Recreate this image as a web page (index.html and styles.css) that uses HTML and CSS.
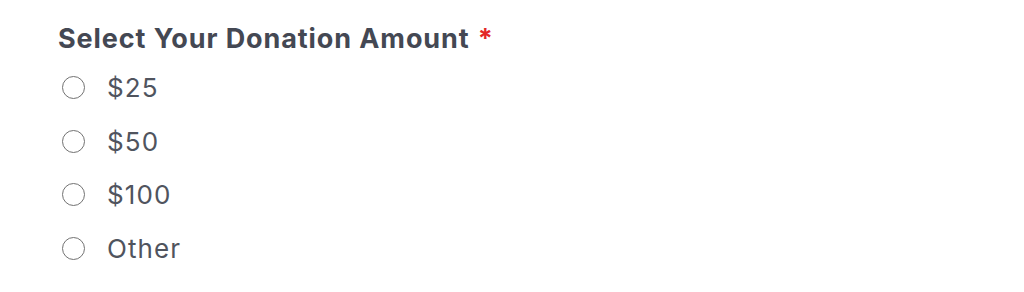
FILE: index.html
```html
<!DOCTYPE html>
<html lang="en">
<head>
    <meta charset="UTF-8">
    <meta name="viewport" content="width=device-width, initial-scale=1.0">
    <title>Donation</title>
    <link rel="stylesheet" href="styles.css">
</head>
<body>
    <div class="field">
        <div class="field-label">Select Your Donation Amount <span class="required">*</span></div>
        <ul class="choices">
            <li><label><input type="radio" name="amount"><span class="circle"></span>$25</label></li>
            <li><label><input type="radio" name="amount"><span class="circle"></span>$50</label></li>
            <li><label><input type="radio" name="amount"><span class="circle"></span>$100</label></li>
            <li><label><input type="radio" name="amount"><span class="circle"></span>Other</label></li>
        </ul>
    </div>
</body>
</html>
```

FILE: styles.css
```css
body {
    margin: 0;
    background: #fff;
    font-family: Inter, "Liberation Sans", Arial, sans-serif;
}

.field {
    padding: 22px 0 0 58px;
}

.field-label {
    font-size: 27px;
    font-weight: 700;
    letter-spacing: 0.9px;
    color: #444853;
    line-height: 34px;
}

.required {
    color: #e32727;
    margin-left: 1px;
}

.choices {
    list-style: none;
    margin: 0;
    padding: 0;
    margin-top: 5px;
}

.choices li {
    height: 53.5px;
    display: flex;
    align-items: center;
}

.choices label {
    display: flex;
    align-items: center;
    font-size: 26px;
    letter-spacing: 1.1px;
    color: #50545e;
}

.choices input {
    display: none;
}

.circle {
    width: 21px;
    height: 21px;
    border: 1.5px solid #727272;
    border-radius: 50%;
    margin-left: 4px;
    margin-right: 22px;
}
```
